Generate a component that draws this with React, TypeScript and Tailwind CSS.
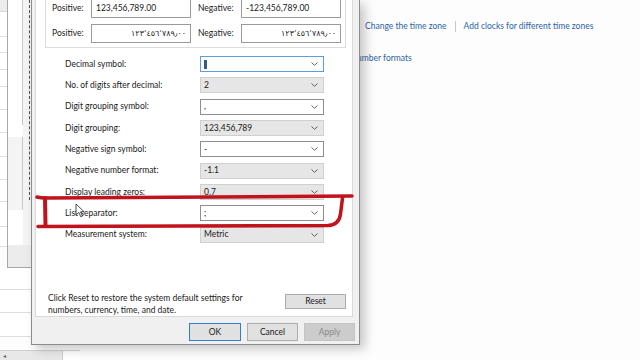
const rows = [
  { label: "Decimal symbol:", value: "", kind: "focus" },
  { label: "No. of digits after decimal:", value: "2", kind: "list" },
  { label: "Digit grouping symbol:", value: ",", kind: "edit" },
  { label: "Digit grouping:", value: "123,456,789", kind: "list" },
  { label: "Negative sign symbol:", value: "-", kind: "edit" },
  { label: "Negative number format:", value: "-1.1", kind: "list" },
  { label: "Display leading zeros:", value: "0.7", kind: "list" },
  { label: "List separator:", value: ";", kind: "edit" },
  { label: "Measurement system:", value: "Metric", kind: "list" },
];

function Chevron() {
  return (
    <svg width="7" height="4" viewBox="0 0 7 4" className="shrink-0">
      <path d="M0.5 0.5 L3.5 3.3 L6.5 0.5" fill="none" stroke="#606060" strokeWidth="1" />
    </svg>
  );
}

function Combo({ value, kind }: { value: string; kind: string }) {
  const box =
    kind === "list"
      ? "bg-[#e6e6e6] border-[#d0d0d0]"
      : kind === "focus"
      ? "bg-white border-[#5a9fe0]"
      : "bg-white border-[#8e8e8e]";
  return (
    <div className={`flex h-[16px] w-[124px] items-center justify-between border pl-[3px] pr-[5px] ${box}`}>
      {kind === "focus" ? (
        <span className="h-[9px] w-[3px] bg-[#3a5a86]" />
      ) : (
        <span className="leading-none">{value}</span>
      )}
      <Chevron />
    </div>
  );
}

function LeftStrip() {
  return (
    <div className="flex w-[31px] shrink-0 flex-col">
      <div className="flex h-[268px]">
        <div className="flex w-[7px] flex-col">
          <div className="h-[12px] border-b border-[#d8d8d8] bg-[#ececec]" />
          {[25, 16, 17, 17, 23, 23, 24, 23, 22, 25, 20].map((h, i) => (
            <div key={i} style={{ height: h }} className="border-b border-[#dedede] bg-white" />
          ))}
        </div>
        <div className="flex w-[24px] flex-col border-b border-l border-[#a8a8a8] bg-[#f4f4f4]">
          <div className="flex flex-1">
            <div className="flex w-[15px] flex-col bg-white">
              <div className="h-[125px] border-r border-[#c8c8c8]" />
              <div className="mt-[12px] h-[73px] border-r border-[#c8c8c8] bg-[#f4f4f4]" />
            </div>
            <div className="ml-[6px] h-[200px] w-[1px] border-l border-dashed border-[#505050]" />
          </div>
          <div className="h-[22px] bg-[#ececec]" />
        </div>
      </div>
      <div className="flex flex-1 flex-col">
        {[22, 23, 24].map((h, i) => (
          <div key={i} style={{ height: h }} className="border-b border-[#dedede] bg-white" />
        ))}
      </div>
    </div>
  );
}

function Dialog() {
  return (
    <div className="relative z-10 flex h-[345px] w-[329px] shrink-0 flex-col border-x border-b border-[#8c8c8c] bg-[#f0f0f0] shadow-[5px_4px_10px_rgba(0,0,0,0.22)]">
      <div className="ml-[3px] flex h-[317px] w-[318px] flex-col border-x border-b border-[#d9d9d9] bg-white">
        {/* sample group box, top cut off */}
        <div className="ml-[9px] flex h-[48px] w-[301px] flex-col border-x border-b border-[#dcdcdc] pl-[6px]">
          <div className="-mt-[1px] flex h-[19px] items-center">
            <span className="w-[39px]">Positive:</span>
            <div className="flex h-[19px] w-[100px] items-center border border-[#9a9a9a] px-[4px]">123,456,789.00</div>
            <span className="ml-[7px] w-[43px]">Negative:</span>
            <div className="flex h-[19px] w-[100px] items-center border border-[#9a9a9a] px-[4px]">-123,456,789.00</div>
          </div>
          <div className="mt-[6px] flex h-[19px] items-center">
            <span className="w-[39px]">Positive:</span>
            <div className="flex h-[19px] w-[100px] items-center justify-end border border-[#9a9a9a] px-[4px] font-['DejaVu_Sans',sans-serif] text-[8px]">١٢٣٬٤٥٦٬٧٨٩٫٠٠</div>
            <span className="ml-[7px] w-[43px]">Negative:</span>
            <div className="flex h-[19px] w-[100px] items-center justify-end border border-[#9a9a9a] px-[4px] font-['DejaVu_Sans',sans-serif] text-[8px]">١٢٣٬٤٥٦٬٧٨٩٫٠٠</div>
          </div>
        </div>

        <div className="mt-[8px] flex flex-col gap-[5.33px]">
          {rows.map((r) => (
            <div key={r.label} className="flex h-[16px] items-center">
              <span className="w-[164px] pl-[29px]">{r.label}</span>
              <Combo value={r.value} kind={r.kind} />
            </div>
          ))}
        </div>

        <div className="mt-[49px] flex items-start">
          <p className="ml-[12px] w-[220px] leading-[12px]">
            Click Reset to restore the system default settings for
            <br />
            numbers, currency, time, and date.
          </p>
          <button className="ml-[17px] mt-[2px] h-[15px] w-[61px] border border-[#adadad] bg-[#e1e1e1] leading-none">
            Reset
          </button>
        </div>
      </div>

      <div className="mt-[6px] flex justify-end gap-[6px] pr-[4px]">
        <button className="h-[18px] w-[52px] border border-[#2f7fd0] bg-[#e1e1e1] leading-none">OK</button>
        <button className="h-[18px] w-[51px] border border-[#adadad] bg-[#e1e1e1] leading-none">Cancel</button>
        <button className="h-[18px] w-[51px] border border-[#c4c4c4] bg-[#cccccc] leading-none text-[#8a8a8a]">Apply</button>
      </div>
    </div>
  );
}

function RightPage() {
  return (
    <div className="flex flex-1 flex-col text-[#2d64a8]">
      <div className="mt-[20px] flex items-center pl-[5px] leading-[12px]">
        <span>Change the time zone</span>
        <span className="ml-[8px] mr-[8px] h-[11px] w-[1px] bg-[#c8c8c8]" />
        <span>Add clocks for different time zones</span>
      </div>
      <div className="-ml-[3px] mt-[20px] leading-[12px]">umber formats</div>
    </div>
  );
}

export default function App() {
  return (
    <div className="relative h-[360px] w-[640px] overflow-hidden bg-[#fdfdfd] font-['Lato','Noto_Sans',sans-serif] text-[8.5px] text-[#1a1a1a]">
      <div className="flex h-[345px]">
        <LeftStrip />
        <Dialog />
        <RightPage />
      </div>
      <div className="flex h-[15px] items-end">
        <div className="flex h-[10px] w-[80px] items-center border-t border-[#d0d0d0] bg-[#e8e8e8]">
          <span className="ml-[3px] text-[6px] leading-none text-[#606060]">◂</span>
          <div className="ml-auto h-[10px] w-[18px] border-l border-[#cfcfcf] bg-white" />
        </div>
      </div>

      {/* red marker annotation */}
      <svg className="pointer-events-none absolute left-0 top-0 z-20" width="640" height="360" viewBox="0 0 640 360">
        <g fill="none" stroke="#c0131b" strokeLinecap="round" strokeLinejoin="round">
          <path d="M37 197 Q40 198 46 198 L352 196" strokeWidth="3.5" />
          <path d="M45 198 L45.5 226" strokeWidth="4" />
          <path d="M38 226.5 L328 225.5 Q339 225 340.5 214 L342.5 198" strokeWidth="3.5" />
        </g>
        {/* mouse pointer */}
        <path
          d="M76 204 L76 215 L78.8 212.4 L80.8 216.8 L82.4 216.1 L80.5 211.8 L84.2 211.8 Z"
          fill="#ffffff"
          stroke="#222222"
          strokeWidth="0.8"
          strokeLinejoin="round"
        />
      </svg>
    </div>
  );
}
